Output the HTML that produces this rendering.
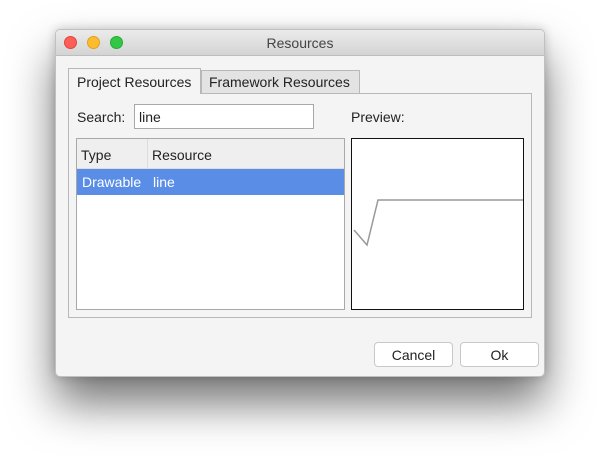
<!DOCTYPE html>
<html><head><style>
*{margin:0;padding:0;box-sizing:border-box}
body{width:600px;height:456px;background:#fff;position:relative;overflow:hidden;font-family:"Liberation Sans",sans-serif;font-size:13px;color:#222}
.win{position:absolute;left:55px;top:29px;width:490px;height:348px;background:#f4f4f4;border-radius:5px;border:1px solid #c0c0c0;box-shadow:0 26px 45px rgba(0,0,0,0.55),0 0 10px rgba(0,0,0,0.2);overflow:hidden}
.tb{position:absolute;left:0;top:0;width:100%;height:26px;background:linear-gradient(#ebebeb,#d4d4d4);border-bottom:1px solid #bdbdbd;text-align:center;line-height:27px;font-size:14px;color:#444}
.dot{position:absolute;top:6px;width:13px;height:13px;border-radius:50%}
.abs{position:absolute}
</style></head><body>
<div class="win">
<div class="tb">Resources
<div class="dot" style="left:8px;background:#fc5f57;border:1px solid #e0443e"></div>
<div class="dot" style="left:31px;background:#fdbc2e;border:1px solid #dea123"></div>
<div class="dot" style="left:54px;background:#33c748;border:1px solid #27aa35"></div>
</div>
</div>
<div class="abs" style="left:68px;top:93px;width:464px;height:225px;border:1px solid #b8b8b8;background:#f4f4f4"></div>
<div class="abs" style="left:201px;top:70px;width:159px;height:24px;border:1px solid #b8b8b8;background:#e3e3e3;font-size:14px;line-height:23px;padding-left:7px">Framework Resources</div>
<div class="abs" style="left:68px;top:68px;width:133px;height:26px;border:1px solid #b8b8b8;border-bottom:none;background:#f4f4f4;font-size:14px;line-height:26px;padding-left:8px">Project Resources</div>
<div class="abs" style="left:77px;top:109px;font-size:14px">Search:</div>
<div class="abs" style="left:134px;top:104px;width:180px;height:25px;border:1px solid #a8a8a8;background:#fff;font-size:14px;line-height:24px;padding-left:4px">line</div>
<div class="abs" style="left:351px;top:109px;font-size:14px">Preview:</div>
<div class="abs" style="left:76px;top:138px;width:269px;height:172px;border:1px solid #a8a8a8;background:#fff">
<div class="abs" style="left:0;top:0;width:267px;height:30px;background:#efefef;border-bottom:1px solid #ddd"></div>
<div class="abs" style="left:70px;top:0;width:1px;height:30px;background:#ddd"></div>
<div class="abs" style="left:4px;top:8px;font-size:14px">Type</div>
<div class="abs" style="left:75px;top:8px;font-size:14px">Resource</div>
<div class="abs" style="left:0;top:30px;width:267px;height:26px;background:#5a8de6"></div>
<div class="abs" style="left:5px;top:35px;font-size:14px;color:#fff">Drawable</div>
<div class="abs" style="left:76px;top:35px;font-size:14px;color:#fff">line</div>
</div>
<div class="abs" style="left:351px;top:138px;width:173px;height:172px;border:1px solid #111;background:#fff">
<svg width="171" height="170" style="position:absolute;left:0;top:0"><polyline points="2,91 15,106 26,61 171,61" fill="none" stroke="#999" stroke-width="1.5"/></svg>
</div>
<div class="abs" style="left:374px;top:342px;width:79px;height:25px;border:1px solid #c8c8c8;border-radius:4px;background:#fff;text-align:center;line-height:24px;font-size:14px">Cancel</div>
<div class="abs" style="left:460px;top:342px;width:79px;height:25px;border:1px solid #c8c8c8;border-radius:4px;background:#fff;text-align:center;line-height:24px;font-size:14px">Ok</div>
</body></html>
